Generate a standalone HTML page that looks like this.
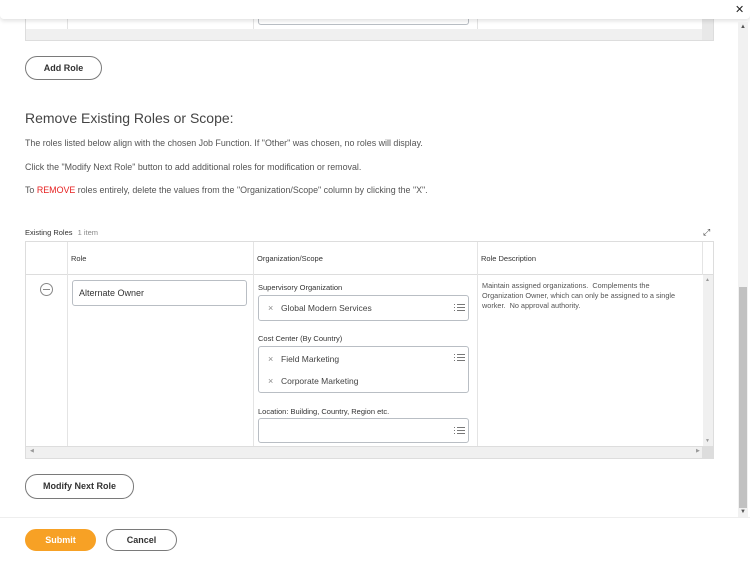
<!DOCTYPE html>
<html><head><style>
*{box-sizing:border-box;margin:0;padding:0}
body{width:750px;height:563px;position:relative;background:#fff;font-family:"Liberation Sans",sans-serif;color:#333;overflow:hidden}
.a{position:absolute}
.btn{position:absolute;border:1px solid #7a7a7a;border-radius:12px;background:#fff;font-size:9px;font-weight:bold;color:#333;text-align:center}
.t{font-size:8.9px;color:#555}
.box{position:absolute;border:1px solid #b9bec4;border-radius:3px;background:#fff}
.lst{position:absolute;width:11px;height:8px}
.lst i{position:absolute;left:3px;right:0;height:1px;background:#777}
.lst b{position:absolute;left:0;width:1px;height:1px;background:#777}
.it{line-height:11px;height:11px;white-space:nowrap}
.x{color:#888;font-size:9px;display:inline-block;width:13px}
.tx{font-size:8.5px;color:#444}
</style></head><body>
<div class="a" style="left:25px;top:18px;width:689px;height:23px;border:1px solid #ddd;border-top:none;background:#fff"></div>
<div class="a" style="left:67px;top:18px;width:1px;height:11px;background:#e4e4e4"></div>
<div class="a" style="left:253px;top:18px;width:1px;height:11px;background:#e4e4e4"></div>
<div class="a" style="left:477px;top:18px;width:1px;height:11px;background:#e4e4e4"></div>
<div class="a" style="left:258px;top:18px;width:211px;height:7px;border:1px solid #b9bec4;border-top:none;border-radius:0 0 3px 3px"></div>
<div class="a" style="left:26px;top:29px;width:687px;height:11px;background:#f0f0f0"></div>
<div class="a" style="left:702px;top:18px;width:11px;height:22px;background:#e8e8e8"></div>
<div class="a" style="left:0;top:0;width:750px;height:19px;background:#fff;box-shadow:0 2px 4px rgba(0,0,0,.12);border-radius:0 0 4px 4px"></div>
<div class="a" style="left:735px;top:3px;font-size:11px;color:#222">✕</div>
<div class="a" style="left:738px;top:22px;width:10px;height:496px;background:#f1f1f1"></div>
<div class="a" style="left:739px;top:287px;width:8px;height:221px;background:#c1c1c1"></div>
<div class="a" style="left:740px;top:24px;font-size:6px;color:#555">▲</div>
<div class="a" style="left:740px;top:509px;font-size:6px;color:#555">▼</div>

<div class="btn" style="left:25px;top:56px;width:77px;height:24px;line-height:22px">Add Role</div>
<div class="a" style="left:25px;top:110px;font-size:14px;color:#444">Remove Existing Roles or Scope:</div>
<div class="a t" style="left:25px;top:138px">The roles listed below align with the chosen Job Function. If "Other" was chosen, no roles will display.</div>
<div class="a t" style="left:25px;top:162px">Click the "Modify Next Role" button to add additional roles for modification or removal.</div>
<div class="a t" style="left:25px;top:185px">To <span style="color:#e62020">REMOVE</span> roles entirely, delete the values from the "Organization/Scope" column by clicking the "X".</div>

<div class="a" style="left:25px;top:228px;font-size:7.5px;color:#333">Existing Roles <span style="color:#888;margin-left:3px">1 item</span></div>
<div class="a" style="left:703px;top:227px;font-size:9px;color:#444">⤢</div>

<div class="a" style="left:25px;top:241px;width:689px;height:218px;border:1px solid #ddd"></div>
<div class="a" style="left:26px;top:274px;width:687px;height:1px;background:#ddd"></div>
<div class="a" style="left:67px;top:242px;width:1px;height:204px;background:#e4e4e4"></div>
<div class="a" style="left:253px;top:242px;width:1px;height:204px;background:#e4e4e4"></div>
<div class="a" style="left:477px;top:242px;width:1px;height:204px;background:#e4e4e4"></div>
<div class="a" style="left:702px;top:242px;width:1px;height:33px;background:#e4e4e4"></div>
<div class="a" style="left:703px;top:275px;width:10px;height:171px;background:#f0f0f0"></div>
<div class="a" style="left:705px;top:277px;font-size:5px;color:#999">▲</div>
<div class="a" style="left:705px;top:438px;font-size:5px;color:#999">▼</div>
<div class="a" style="left:26px;top:446px;width:687px;height:12px;background:#f0f0f0;border-top:1px solid #ddd"></div>
<div class="a" style="left:30px;top:448px;font-size:5px;color:#999">◀</div>
<div class="a" style="left:696px;top:448px;font-size:5px;color:#999">▶</div>
<div class="a" style="left:702px;top:446px;width:11px;height:12px;background:#ddd"></div>
<div class="a" style="left:71px;top:254px;font-size:7.5px">Role</div>
<div class="a" style="left:257px;top:254px;font-size:7.5px">Organization/Scope</div>
<div class="a" style="left:481px;top:254px;font-size:7.5px">Role Description</div>

<div class="a" style="left:40px;top:283px;width:13px;height:13px;border:1px solid #888;border-radius:50%"></div>
<div class="a" style="left:43px;top:289px;width:7px;height:1px;background:#888"></div>
<div class="box" style="left:72px;top:280px;width:175px;height:26px"></div>
<div class="a" style="left:79px;top:288px;font-size:9px;color:#333">Alternate Owner</div>

<div class="a" style="left:258px;top:283px;font-size:7.5px">Supervisory Organization</div>
<div class="box" style="left:258px;top:295px;width:211px;height:26px"></div>
<div class="a it" style="left:268px;top:301px"><span class="x">×</span><span class="tx">Global Modern Services</span></div>
<div class="a" style="left:258px;top:334px;font-size:7.5px">Cost Center (By Country)</div>
<div class="box" style="left:258px;top:346px;width:211px;height:47px"></div>
<div class="a it" style="left:268px;top:352px"><span class="x">×</span><span class="tx">Field Marketing</span></div>
<div class="a it" style="left:268px;top:374px"><span class="x">×</span><span class="tx">Corporate Marketing</span></div>
<div class="a" style="left:258px;top:407px;font-size:7.5px">Location: Building, Country, Region etc.</div>
<div class="box" style="left:258px;top:418px;width:211px;height:25px"></div>

<div class="lst" style="left:454px;top:304px"><b style="top:0"></b><i style="top:0"></i><b style="top:3px"></b><i style="top:3px"></i><b style="top:6px"></b><i style="top:6px"></i></div>
<div class="lst" style="left:454px;top:354px"><b style="top:0"></b><i style="top:0"></i><b style="top:3px"></b><i style="top:3px"></i><b style="top:6px"></b><i style="top:6px"></i></div>
<div class="lst" style="left:454px;top:427px"><b style="top:0"></b><i style="top:0"></i><b style="top:3px"></b><i style="top:3px"></i><b style="top:6px"></b><i style="top:6px"></i></div>

<div class="a" style="left:482px;top:281px;width:208px;font-size:7.3px;line-height:10px;color:#555">Maintain assigned organizations.&nbsp; Complements the Organization Owner, which can only be assigned to a single worker.&nbsp; No approval authority.</div>

<div class="btn" style="left:25px;top:474px;width:109px;height:25px;line-height:23px">Modify Next Role</div>
<div class="a" style="left:0;top:517px;width:750px;height:1px;background:#eee"></div>
<div class="btn" style="left:25px;top:529px;width:71px;height:22px;line-height:21px;background:#f7a125;border-color:#f7a125;color:#fff">Submit</div>
<div class="btn" style="left:106px;top:529px;width:71px;height:22px;line-height:20px">Cancel</div>
</body></html>
